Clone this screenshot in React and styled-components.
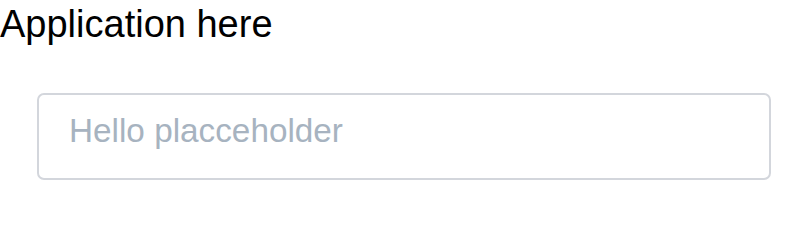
import React from "react";
import styled, { createGlobalStyle } from "styled-components";

const Global = createGlobalStyle`
  html, body { margin: 0; padding: 0; background: #fff; }
  body { font-family: "Liberation Sans", Arial, sans-serif; }
`;

const Page = styled.div`
  display: flex;
  flex-direction: column;
`;

const Title = styled.h1`
  margin: 0;
  padding-top: 1px;
  font-size: 38px;
  font-weight: 400;
  line-height: 46px;
  color: #000;
`;

const Field = styled.div`
  padding: 46px 28px 0 37px;
`;

const Input = styled.input`
  box-sizing: border-box;
  width: 100%;
  height: 87px;
  padding: 0 30px 12px 30px;
  border: 2px solid #d3d6dc;
  border-radius: 7px;
  font-family: "Liberation Sans", Arial, sans-serif;
  font-size: 33.3px;
  color: #222;
  outline: none;
  &::placeholder { color: #a7b3c0; }
`;

export default function App() {
  return (
    <Page>
      <Global />
      <Title>Application here</Title>
      <Field>
        <Input placeholder="Hello placceholder" />
      </Field>
    </Page>
  );
}
